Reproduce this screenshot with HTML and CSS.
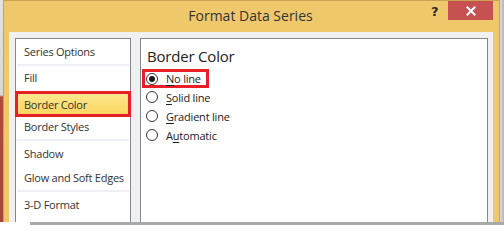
FILE: index.html
```html
<!DOCTYPE html>
<html>
<head>
<meta charset="utf-8">
<link rel="stylesheet" href="styles.css">
</head>
<body>
<div class="screen">
  <div class="row">
    <div class="edge"></div>
    <div class="window">
      <div class="titlebar">
        <div class="title">Format Data Series</div>
        <div class="help">?</div>
        <div class="close">
          <svg width="10" height="10" viewBox="0 0 10 10"><path d="M1.5 1.5 L8.5 8.5 M8.5 1.5 L1.5 8.5" stroke="#fff" stroke-width="2" stroke-linecap="square"/></svg>
        </div>
      </div>
      <div class="body">
        <div class="nav">
          <div class="item first">Series Options</div>
          <div class="sep"></div>
          <div class="item">Fill</div>
          <div class="item active">Border Color</div>
          <div class="item">Border Styles</div>
          <div class="sep"></div>
          <div class="item">Shadow</div>
          <div class="item">Glow and Soft Edges</div>
          <div class="sep"></div>
          <div class="item">3-D Format</div>
        </div>
        <div class="pane">
          <div class="heading">Border Color</div>
          <div class="option selected"><span class="radio on"></span><span class="label"><u>N</u>o line</span></div>
          <div class="option"><span class="radio"></span><span class="label"><u>S</u>olid line</span></div>
          <div class="option"><span class="radio"></span><span class="label"><u>G</u>radient line</span></div>
          <div class="option"><span class="radio"></span><span class="label">A<u>u</u>tomatic</span></div>
        </div>
      </div>
    </div>
    <div class="gap"></div>
  </div>
  <div class="shadow"></div>
</div>
</body>
</html>
```
FILE: styles.css
```css
html, body {
  margin: 0;
  padding: 0;
  background: #ffffff;
}
.screen {
  width: 504px;
  height: 225px;
  display: flex;
  flex-direction: column;
  overflow: hidden;
  font-family: "Open Sans", "Noto Sans", sans-serif;
}
.row {
  display: flex;
  height: 222px;
}
.edge {
  width: 3px;
  background: linear-gradient(#e2e2e2 0, #d8d8d8 95px, #b04a3b 97px, #a8473a 100%);
}
.gap {
  width: 4px;
  background: linear-gradient(90deg, #dedede, #b4b4b4);
}
.shadow {
  height: 3px;
  margin-left: 30px;
  background: #a9a9a9;
}
.window {
  width: 495px;
  background: #f0c86c;
  border: 1px solid #c9a34f;
  border-bottom: none;
  display: flex;
  flex-direction: column;
}
.titlebar {
  height: 31px;
  display: flex;
  align-items: flex-start;
}
.title {
  flex: 1;
  text-align: center;
  font-size: 14px;
  line-height: 18px;
  margin-top: 6px;
  padding-left: 66px;
  color: #333333;
  white-space: nowrap;
}
.help {
  width: 12px;
  margin-top: 3px;
  font-family: "DejaVu Sans", sans-serif;
  font-weight: bold;
  font-size: 13px;
  line-height: 16px;
  color: #2a2a2a;
  margin-right: 5px;
}
.close {
  width: 45px;
  height: 19px;
  margin-right: 6px;
  background: #c75050;
  display: flex;
  align-items: center;
  justify-content: center;
}
.close svg { display: block; }
.body {
  flex: 1;
  margin: 0 6px 0 5px;
  background: #f0f0f0;
  display: flex;
  align-items: flex-start;
  padding: 6px 5px 0 6px;
  gap: 9px;
  overflow: hidden;
}
.nav {
  width: 114px;
  height: 200px;
  background: #ffffff;
  border: 1px solid #828790;
  border-bottom: none;
  flex-shrink: 0;
  display: flex;
  flex-direction: column;
}
.item {
  height: 24.5px;
  display: flex;
  align-items: center;
  padding-left: 8px;
  font-size: 11px;
  letter-spacing: -0.25px;
  color: #333333;
  box-sizing: border-box;
  white-space: nowrap;
}
.sep {
  height: 2px;
  margin: 0 1px;
  background: #eef0f5;
}
.item.active {
  height: 26px;
  margin: 1px -1px -2.5px -1px;
  padding-left: 6px;
  border: 3px solid #e81f27;
  background: linear-gradient(#fde88f, #f9d65f);
}
.pane {
  flex: 1;
  height: 200px;
  background: #ffffff;
  border: 1px solid #828790;
  border-bottom: none;
  padding: 7px 0 0 0;
  display: flex;
  flex-direction: column;
  align-items: flex-start;
}
.heading {
  font-size: 15px;
  line-height: 20px;
  height: 20px;
  margin-left: 6px;
  margin-bottom: 2.5px;
  color: #222222;
  letter-spacing: -0.2px;
}
.option {
  height: 19px;
  display: flex;
  align-items: center;
  padding-left: 5px;
  font-size: 11px;
  letter-spacing: -0.2px;
  color: #222222;
  box-sizing: border-box;
  white-space: nowrap;
}
.option.selected {
  border: 3px solid #e81f27;
  margin-left: 1px;
  padding-left: 1px;
  padding-right: 5px;
  margin-top: 0.5px;
  margin-bottom: -0.5px;
}
.radio {
  width: 12px;
  height: 12px;
  box-sizing: border-box;
  border: 1px solid #333333;
  border-radius: 50%;
  background: #ffffff;
  margin-right: 8px;
  display: flex;
  align-items: center;
  justify-content: center;
}
.radio.on::after {
  content: "";
  width: 6px;
  height: 6px;
  border-radius: 50%;
  background: #1a1a1a;
}
.label u {
  text-underline-offset: 2px;
}
```
